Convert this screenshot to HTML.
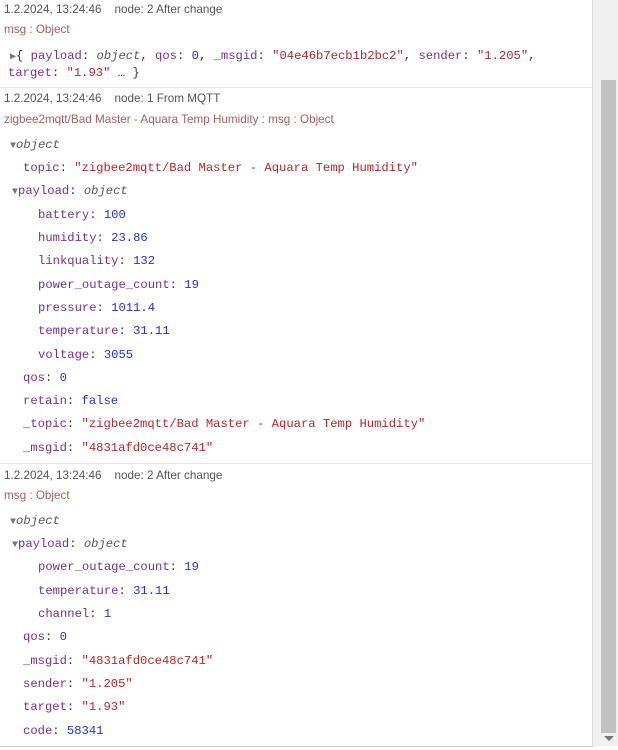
<!DOCTYPE html><html><head><style>
body{margin:0;width:618px;height:750px;background:#fff;position:relative;overflow:hidden;font-family:"Liberation Sans",sans-serif}
.p{position:absolute;left:0;top:0;width:592px;height:746px;border-right:1px solid #ddd;border-bottom:1px solid #ccc}
.sb{position:absolute;left:593px;top:0;width:25px;height:746px;background:#f0f0f0}
.th{position:absolute;left:601px;top:80px;width:15px;height:653px;background:#c1c1c1}
.l{position:absolute;white-space:pre;line-height:16px;transform:translateY(-7px)}
.h{font-size:11.7px;color:#555}
.s{font-size:11.7px;color:#a66060}
.m{font-family:"Liberation Mono",monospace;font-size:12.2px;color:#333}
.k{color:#792e90}.st{color:#b72828}.n{color:#2033d6}.t{font-style:italic;color:#555}
.sep{position:absolute;left:0;width:592px;height:1px;background:#e6e6e6}
.a{font-size:10px;color:#777}
</style></head><body>
<div class="p"></div><div class="sb"></div><div class="th"></div>
<div class="l h" style="left:4px;top:9px">1.2.2024, 13:24:46    node: 2 After change</div>
<div class="l s" style="left:4px;top:29px">msg : Object</div>
<div class="l m" style="left:10px;top:55px"><span class="a">▶</span>{ <span class="k">payload</span>: <span class="t">object</span>, <span class="k">qos</span>: <span class="n">0</span>, <span class="k">_msgid</span>: <span class="st">"04e46b7ecb1b2bc2"</span>, <span class="k">sender</span>: <span class="st">"1.205"</span>,</div>
<div class="l m" style="left:8px;top:72px"><span class="k">target</span>: <span class="st">"1.93"</span> … }</div>
<div class="sep" style="top:87px"></div>
<div class="l h" style="left:4px;top:98px">1.2.2024, 13:24:46    node: 1 From MQTT</div>
<div class="l s" style="left:4px;top:119px">zigbee2mqtt/Bad Master - Aquara Temp Humidity : msg : Object</div>
<div class="l m" style="left:10px;top:144px"><span class="a">▼</span><span class="t">object</span></div>
<div class="l m" style="left:23px;top:167px"><span class="k">topic</span>: <span class="st">"zigbee2mqtt/Bad Master - Aquara Temp Humidity"</span></div>
<div class="l m" style="left:12px;top:190px"><span class="a">▼</span><span class="k">payload</span>: <span class="t">object</span></div>
<div class="l m" style="left:38px;top:214px"><span class="k">battery</span>: <span class="n">100</span></div>
<div class="l m" style="left:38px;top:237px"><span class="k">humidity</span>: <span class="n">23.86</span></div>
<div class="l m" style="left:38px;top:260px"><span class="k">linkquality</span>: <span class="n">132</span></div>
<div class="l m" style="left:38px;top:284px"><span class="k">power_outage_count</span>: <span class="n">19</span></div>
<div class="l m" style="left:38px;top:307px"><span class="k">pressure</span>: <span class="n">1011.4</span></div>
<div class="l m" style="left:38px;top:330px"><span class="k">temperature</span>: <span class="n">31.11</span></div>
<div class="l m" style="left:38px;top:354px"><span class="k">voltage</span>: <span class="n">3055</span></div>
<div class="l m" style="left:23px;top:377px"><span class="k">qos</span>: <span class="n">0</span></div>
<div class="l m" style="left:23px;top:400px"><span class="k">retain</span>: <span class="n">false</span></div>
<div class="l m" style="left:23px;top:423px"><span class="k">_topic</span>: <span class="st">"zigbee2mqtt/Bad Master - Aquara Temp Humidity"</span></div>
<div class="l m" style="left:23px;top:447px"><span class="k">_msgid</span>: <span class="st">"4831afd0ce48c741"</span></div>
<div class="sep" style="top:463px"></div>
<div class="l h" style="left:4px;top:475px">1.2.2024, 13:24:46    node: 2 After change</div>
<div class="l s" style="left:4px;top:495px">msg : Object</div>
<div class="l m" style="left:10px;top:520px"><span class="a">▼</span><span class="t">object</span></div>
<div class="l m" style="left:12px;top:543px"><span class="a">▼</span><span class="k">payload</span>: <span class="t">object</span></div>
<div class="l m" style="left:38px;top:566px"><span class="k">power_outage_count</span>: <span class="n">19</span></div>
<div class="l m" style="left:38px;top:590px"><span class="k">temperature</span>: <span class="n">31.11</span></div>
<div class="l m" style="left:38px;top:613px"><span class="k">channel</span>: <span class="n">1</span></div>
<div class="l m" style="left:23px;top:636px"><span class="k">qos</span>: <span class="n">0</span></div>
<div class="l m" style="left:23px;top:660px"><span class="k">_msgid</span>: <span class="st">"4831afd0ce48c741"</span></div>
<div class="l m" style="left:23px;top:683px"><span class="k">sender</span>: <span class="st">"1.205"</span></div>
<div class="l m" style="left:23px;top:706px"><span class="k">target</span>: <span class="st">"1.93"</span></div>
<div class="l m" style="left:23px;top:730px"><span class="k">code</span>: <span class="n">58341</span></div>
<div style="position:absolute;left:604px;top:736px;width:0;height:0;border-left:5px solid transparent;border-right:5px solid transparent;border-top:5px solid #777"></div>
</body></html>
